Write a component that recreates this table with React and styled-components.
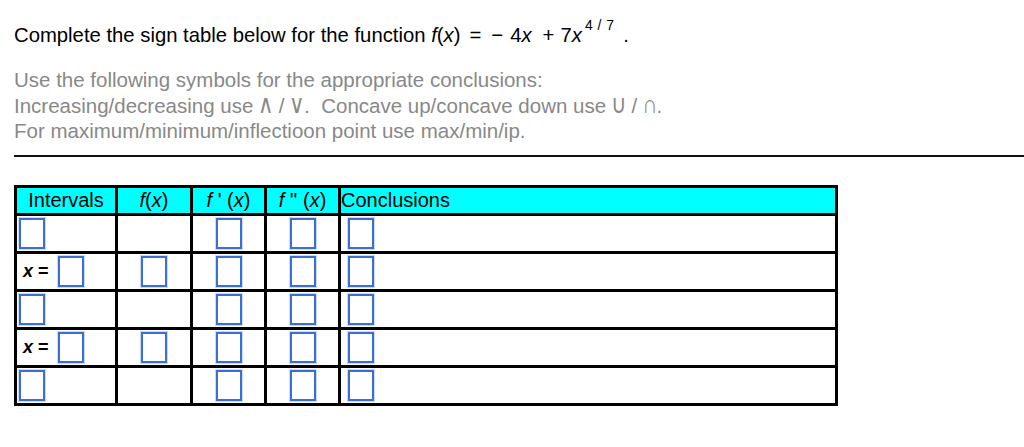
import React from "react";
import styled, { createGlobalStyle } from "styled-components";

const GlobalStyle = createGlobalStyle`
  html, body { margin: 0; padding: 0; background: #fff; }
  body {
    font-family: "Liberation Sans", Arial, Helvetica, sans-serif;
    color: #000;
  }
`;

const Page = styled.div`
  padding: 24px 0 40px 14px;
`;

const Title = styled.div`
  font-size: 20.3px;
  line-height: 22px;
  height: 22px;
  white-space: nowrap;
`;

const Term = styled.span`
  margin-left: ${(p) => p.$ml || 0}px;
`;

const Sup = styled.span`
  font-size: 14px;
  line-height: 0;
  vertical-align: 12px;
  margin-left: ${(p) => p.$ml || 0}px;
  word-spacing: 1px;
`;

const Instructions = styled.div`
  margin-top: 21px;
  font-size: 20.5px;
  line-height: 25.5px;
  color: #888;
  white-space: nowrap;
`;

const Sym = styled.span`
  display: inline-block;
  font-family: "DejaVu Sans", sans-serif;
  font-size: 19px;
  font-weight: 200;
  line-height: 19px;
  transform: scale(1.1, 1.35);
  transform-origin: 50% 84%;
`;

const Rule = styled.div`
  margin-top: 11px;
  height: 2px;
  background: #111;
`;

const Table = styled.div`
  margin-top: 28px;
  display: grid;
  grid-template-columns: 98px 72px 71px 71px 494px;
  grid-template-rows: 25px repeat(5, 35px);
  gap: 3px;
  padding: 3px;
  background: #000;
  width: fit-content;
`;

const HeadCell = styled.div`
  background: #00ffff;
  font-size: 20px;
  line-height: 25px;
  white-space: pre;
  text-align: ${(p) => (p.$left ? "left" : "center")};
`;

const Cell = styled.div`
  background: #fff;
  display: flex;
  align-items: center;
  justify-content: ${(p) => (p.$center ? "center" : "flex-start")};
  padding-left: ${(p) => p.$pad || 0}px;
  gap: 9px;
`;

const Box = styled.span`
  display: block;
  width: 26px;
  height: 31px;
  box-sizing: border-box;
  border: 2px solid #3c6fd5;
  box-shadow: 0 0 0 1px rgba(140, 175, 235, 0.45);
  background: #fff;
`;

const XLabel = styled.span`
  font-size: 18px;
  font-weight: bold;
  white-space: pre;
`;

const Rows = [
  { interval: false },
  { interval: true },
  { interval: false },
  { interval: true },
  { interval: false },
];

export default function App() {
  return (
    <>
      <GlobalStyle />
      <Page>
        <Title>
          Complete the sign table below for the function <i>f</i>(<i>x</i>)
          <Term $ml={9}>=</Term>
          <Term $ml={10}>−</Term>
          <Term $ml={7}>
            4<i>x</i>
          </Term>
          <Term $ml={11}>+</Term>
          <Term $ml={6}>
            7<i>x</i>
          </Term>
          <Sup $ml={3}>4 / 7</Sup>
          <Term $ml={9}>.</Term>
        </Title>
        <Instructions>
          Use the following symbols for the appropriate conclusions:
          <br />
          Increasing/decreasing use <Sym>∧</Sym> / <Sym>∨</Sym>.{"\u00a0"} Concave
          up/concave down use <Sym>∪</Sym> / <Sym>∩</Sym>.
          <br />
          For maximum/minimum/inflectioon point use max/min/ip.
        </Instructions>
        <Rule />
        <Table>
          <HeadCell>Intervals</HeadCell>
          <HeadCell>
            <i>f</i>(<i>x</i>)
          </HeadCell>
          <HeadCell>
            <i>f</i>{"\u00a0"}'{"\u00a0"}(<i>x</i>)
          </HeadCell>
          <HeadCell>
            <i>f</i>{"\u00a0"}''{"\u00a0"}(<i>x</i>)
          </HeadCell>
          <HeadCell $left>Conclusions</HeadCell>
          {Rows.map((r, i) => (
            <React.Fragment key={i}>
              {r.interval ? (
                <Cell $pad={6}>
                  <XLabel>
                    <i>x</i> =
                  </XLabel>
                  <Box />
                </Cell>
              ) : (
                <Cell $pad={2}>
                  <Box />
                </Cell>
              )}
              <Cell $center>{r.interval && <Box />}</Cell>
              <Cell $center>
                <Box />
              </Cell>
              <Cell $center>
                <Box />
              </Cell>
              <Cell $pad={7}>
                <Box />
              </Cell>
            </React.Fragment>
          ))}
        </Table>
      </Page>
    </>
  );
}
